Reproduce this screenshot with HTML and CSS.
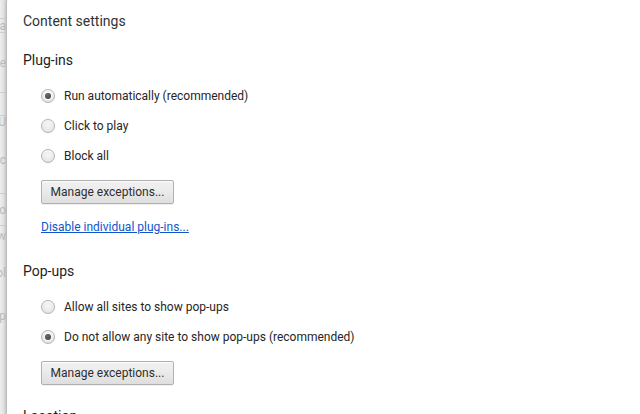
FILE: index.html
```html
<!DOCTYPE html>
<html>
<head>
<meta charset="utf-8">
<title>Content settings</title>
<link rel="stylesheet" href="styles.css">
</head>
<body>
<div class="page">
  <div class="backdrop">
    <div class="bg-row h19 line-b"></div>
    <div class="bg-row h14 line-b"><span>ea</span></div>
    <div class="bg-row h59"><span>e</span></div>
    <div class="bg-row h23 line-t"></div>
    <div class="bg-row h12 line-t"><span>U</span></div>
    <div class="bg-row h66"><span>ic</span></div>
    <div class="bg-row h32 line-t"><span>o</span></div>
    <div class="bg-row h20 line-t"><span>w</span></div>
    <div class="bg-row h56"><span>ol</span></div>
    <div class="bg-row h30"><span>lp</span></div>
  </div>
  <main class="dialog">
    <h1 class="title">Content settings</h1>

    <section class="section">
      <h2 class="heading">Plug-ins</h2>
      <div class="options">
        <label class="option"><span class="radio checked"></span><span class="label">Run automatically (recommended)</span></label>
        <label class="option"><span class="radio"></span><span class="label">Click to play</span></label>
        <label class="option"><span class="radio"></span><span class="label">Block all</span></label>
      </div>
      <button class="btn">Manage exceptions...</button>
      <a class="link" href="#">Disable individual plug-ins...</a>
    </section>

    <section class="section popups">
      <h2 class="heading">Pop-ups</h2>
      <div class="options">
        <label class="option"><span class="radio"></span><span class="label">Allow all sites to show pop-ups</span></label>
        <label class="option"><span class="radio checked"></span><span class="label">Do not allow any site to show pop-ups (recommended)</span></label>
      </div>
      <button class="btn">Manage exceptions...</button>
    </section>

    <section class="section location">
      <h2 class="heading">Location</h2>
    </section>
  </main>
</div>
</body>
</html>
```

FILE: styles.css
```css
* { box-sizing: border-box; }
html, body {
  margin: 0;
  padding: 0;
  width: 640px;
  height: 414px;
  overflow: hidden;
  background: #ffffff;
}
body {
  font-family: "Segoe UI", Roboto, "Liberation Sans", sans-serif;
  color: #262626;
}
.page {
  display: flex;
  height: 414px;
}
.backdrop {
  width: 7px;
  flex: 0 0 7px;
  display: flex;
  flex-direction: column;
  overflow: hidden;
  background: linear-gradient(to right, #eeeeee 0px, #e4e4e4 3px, #d2d2d2 6px, #c6c6c6 7px);
}
.bg-row {
  display: flex;
  justify-content: flex-end;
  align-items: center;
  white-space: nowrap;
  font-size: 12px;
  color: #bababa;
  width: 7px;
  padding-right: 1px;
}
.bg-row span { flex: none; }
.line-b { border-bottom: 1px solid #cdcdcd; }
.line-t { border-top: 1px solid #cdcdcd; }
.h12 { height: 12px; }
.h14 { height: 14px; }
.h19 { height: 19px; }
.h20 { height: 20px; }
.h23 { height: 23px; }
.h30 { height: 30px; }
.h32 { height: 32px; }
.h56 { height: 56px; }
.h59 { height: 59px; }
.h66 { height: 66px; }

.dialog {
  flex: 1;
  background: #ffffff;
  border-top-left-radius: 3px;
  box-shadow: -1px 0 3px rgba(0,0,0,0.12);
  padding: 11px 0 0 16px;
  overflow: hidden;
}
.title {
  margin: 0;
  font-size: 14px;
  line-height: 20px;
  font-weight: normal;
  color: #333333;
}
.section {
  display: flex;
  flex-direction: column;
  align-items: flex-start;
}
.heading {
  margin: 19px 0 0 0;
  font-size: 14px;
  line-height: 20px;
  font-weight: normal;
  color: #1e1e1e;
}
.popups .heading { margin-top: 26px; }
.location .heading { margin-top: 21px; }
.options {
  display: flex;
  flex-direction: column;
  margin: 11px 0 0 18px;
}
.option {
  display: flex;
  align-items: center;
  height: 30px;
  font-size: 12px;
}
.radio {
  width: 14px;
  height: 14px;
  border-radius: 50%;
  border: 1px solid #b3b3b3;
  background: radial-gradient(circle at 50% 40%, #f6f6f6 0%, #eaeaea 55%, #dcdcdc 100%);
  display: flex;
  align-items: center;
  justify-content: center;
  margin: 0 9px 0 0;
  box-shadow: inset 0 1px 1px rgba(255,255,255,0.9), 0 0 1px rgba(0,0,0,0.08);
}
.radio.checked::after {
  content: "";
  width: 6px;
  height: 6px;
  border-radius: 50%;
  background: radial-gradient(circle at 40% 35%, #6a6a6a, #3a3a3a);
  box-shadow: 0 0 0 1px rgba(255,255,255,0.6);
}
.label { color: #262626; }
.btn {
  margin: 9px 0 0 18px;
  height: 24px;
  width: 133px;
  padding: 0;
  font-family: inherit;
  font-size: 12px;
  color: #2e2e2e;
  border: 1px solid #b0b0b0;
  border-radius: 2px;
  background: linear-gradient(#f1f1f1, #ececec 40%, #dedede);
  box-shadow: 0 1px 0 rgba(0,0,0,0.06), inset 0 1px 1px rgba(255,255,255,0.8);
}
.link {
  margin: 15px 0 0 18px;
  font-size: 12px;
  line-height: 16px;
  color: #1155cc;
  text-decoration: underline;
}
```
